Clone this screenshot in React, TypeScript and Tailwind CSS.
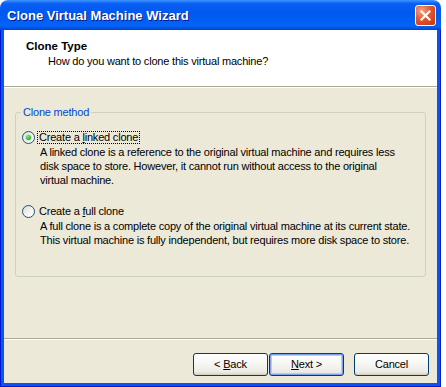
import React from 'react'

function Radio({ checked }: { checked?: boolean }) {
  return (
    <span className="flex h-[13px] w-[13px] shrink-0 items-center justify-center rounded-full border border-[#1C5180] bg-[linear-gradient(135deg,#DCDCD4_0%,#F4F4F0_55%,#FFFFFF_100%)]">
      {checked && (
        <span className="h-[5px] w-[5px] rounded-full bg-[radial-gradient(circle_at_40%_35%,#8BEA88_0%,#2FB02C_60%,#1E8F1C_100%)] shadow-[0_0_0_1px_#C9EEC5]" />
      )}
    </span>
  )
}

function XpButton({ children, isDefault }: { children: React.ReactNode; isDefault?: boolean }) {
  return (
    <button
      className={`flex h-[23px] w-[75px] items-center justify-center rounded-[3px] border border-[#003C74] bg-[linear-gradient(to_bottom,#FFFFFF_0%,#F6F6F3_45%,#ECEBE6_85%,#D6D0C5_100%)] text-[11px] leading-none tracking-[-0.2px] text-black ${
        isDefault
          ? 'shadow-[inset_0_0_0_1px_#7FA2EC,inset_0_0_0_2px_#B6CEF7]'
          : 'shadow-[inset_0_-1px_0_#D6D0C5]'
      }`}
    >
      <span>{children}</span>
    </button>
  )
}

export default function App() {
  return (
    <div className="h-[387px] w-[446px] bg-white font-['Liberation_Sans',Arial,sans-serif]">
      <div className="flex h-[387px] w-[441px] flex-col">
        {/* title bar */}
        <div className="flex h-[30px] shrink-0 items-center justify-between rounded-t-[8px] bg-[linear-gradient(to_bottom,#3D95FF_0%,#0A5FF4_12%,#0058EE_45%,#0463F8_85%,#0054E6_94%,#003FCB_100%)] pl-[7px] pr-[5px]">
          <span className="pt-[1px] text-[13px] font-bold leading-none text-white [text-shadow:1px_1px_0_#0A1883]">
            Clone Virtual Machine Wizard
          </span>
          <div className="flex h-[21px] w-[21px] items-center justify-center rounded-[3px] border border-white bg-[radial-gradient(circle_at_30%_25%,#F4A58A_0%,#E0582F_45%,#C0360E_100%)]">
            <svg width="11" height="11" viewBox="0 0 11 11">
              <path d="M1.5 1.5 L9.5 9.5 M9.5 1.5 L1.5 9.5" stroke="white" strokeWidth="2.2" strokeLinecap="square" />
            </svg>
          </div>
        </div>

        {/* frame */}
        <div className="flex flex-1 flex-col bg-[#0A56EC] px-[4px] pb-[4px] shadow-[inset_1px_0_0_#0019CF,inset_-1px_0_0_#0019CF,inset_0_-1px_0_#0019CF]">
          <div className="flex flex-1 flex-col bg-[#ECE9D8] text-[11px] tracking-[-0.2px] text-black">
            {/* header */}
            <div className="h-[56px] bg-white pl-[22px] pt-[9px]">
              <div className="text-[11.5px] font-bold leading-[14px] tracking-normal">Clone Type</div>
              <div className="mt-[1px] pl-[22px] leading-[14px]">How do you want to clone this virtual machine?</div>
            </div>
            <div className="h-[2px] border-t border-b border-t-[#ACA899] border-b-white" />

            {/* group */}
            <fieldset className="mx-[11px] mt-[18px] h-[171px] rounded-[3px] border border-[#D0D0BF] p-0">
              <legend className="ml-[5px] px-[2px] leading-[13px] text-[#0046D5]">Clone method</legend>

              <div className="mt-[12px] flex h-[13px] items-center pl-[6px]">
                <Radio checked />
                <span className="ml-[2px] border border-dotted border-black px-[1px] leading-[11px]">
                  Create a <u>l</u>inked clone
                </span>
              </div>
              <div className="mt-[1px] pl-[24px] leading-[14px]">
                <div>A linked clone is a reference to the original virtual machine and requires less</div>
                <div>disk space to store. However, it cannot run without access to the original</div>
                <div>virtual machine.</div>
              </div>

              <div className="mt-[18px] flex h-[13px] items-center pl-[6px]">
                <Radio />
                <span className="ml-[2px] border border-transparent px-[1px] leading-[11px]">
                  Create a <u>f</u>ull clone
                </span>
              </div>
              <div className="mt-[1px] pl-[24px] leading-[14px]">
                <div>A full clone is a complete copy of the original virtual machine at its current state.</div>
                <div>This virtual machine is fully independent, but requires more disk space to store.</div>
              </div>
            </fieldset>

            <div className="flex-1" />
            <div className="h-[2px] border-t border-b border-t-[#ACA899] border-b-white" />

            {/* buttons */}
            <div className="flex justify-end pb-[7px] pr-[8px] pt-[13px]">
              <XpButton>
                &lt; <u>B</u>ack
              </XpButton>
              <div className="ml-[1px]">
                <XpButton isDefault>
                  <u>N</u>ext &gt;
                </XpButton>
              </div>
              <div className="ml-[10px]">
                <XpButton>Cancel</XpButton>
              </div>
            </div>
          </div>
        </div>
      </div>
    </div>
  )
}
